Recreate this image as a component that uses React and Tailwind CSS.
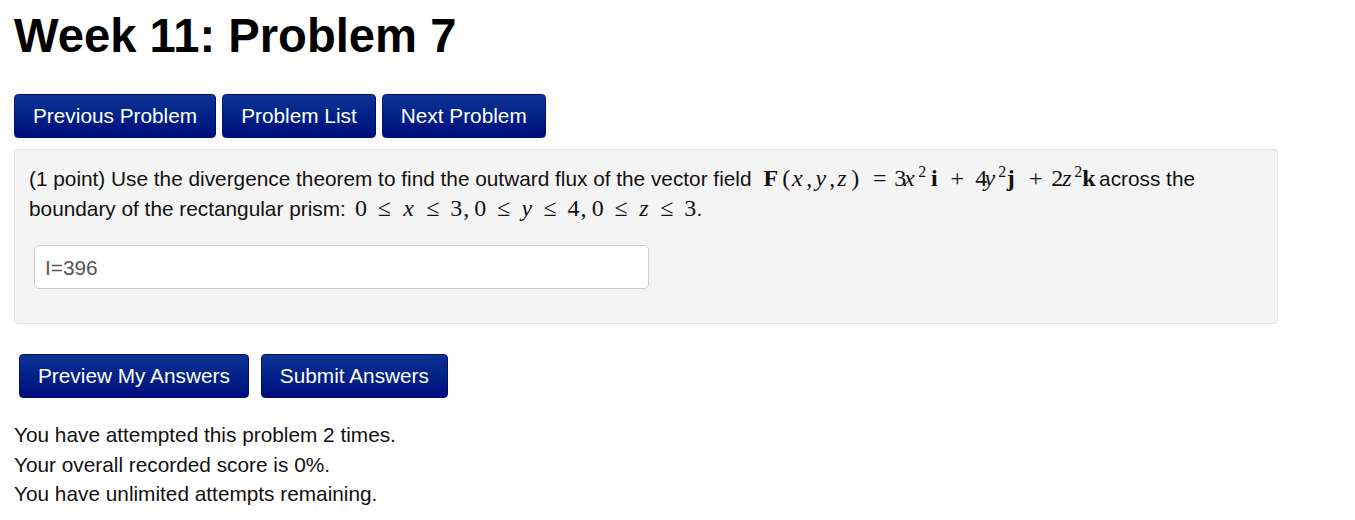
import React from "react";

const btn =
  "h-[44px] px-[18px] rounded-[4px] border border-[#00106a] bg-gradient-to-b from-[#0d3393] to-[#000b7d] text-white text-[20.8px] leading-none flex items-center";

const SUP = "text-[16px] relative top-[-9px]";

// [glyph, classes]
const line1 = [
  ["F", "w-[17px] ml-[5px] font-bold"],
  ["(", "w-[6px] ml-[3px]"],
  ["x", "w-[14px] ml-[2px] italic"],
  [",", "w-[3px] ml-[2px]"],
  ["y", "w-[13px] ml-[5px] italic"],
  [",", "w-[3px] ml-[2px]"],
  ["z", "w-[11px] ml-[4px] italic"],
  [")", "w-[6px] ml-[4px]"],
  ["=", "w-[15px] ml-[15px]"],
  ["3", "w-[8px] ml-[7px]"],
  ["x", "w-[16px] ml-[-1px] italic"],
  ["2", "w-[8px] ml-[1px] " + SUP],
  ["i", "w-[8px] ml-[4px] font-bold"],
  ["+", "w-[18px] ml-[10px]"],
  ["4", "w-[10px] ml-[9px]"],
  ["y", "w-[13px] ml-[-2px] italic"],
  ["2", "w-[7px] ml-[2px] " + SUP],
  ["j", "w-[9px] ml-[1px] font-bold"],
  ["+", "w-[19px] ml-[11px]"],
  ["2", "w-[10px] ml-[6px]"],
  ["z", "w-[13px] ml-[-1px] italic"],
  ["2", "w-[7px] ml-[1px] " + SUP],
  ["k", "w-[11px] ml-[1px] font-bold"],
];

const LE = "w-[19.8px] mx-[7.1px]";
const D = "w-[12.75px]";
const line2 = [
  ["0", D + " ml-[3px]"],
  ["≤", LE],
  ["x", "w-[14.6px] italic"],
  ["≤", LE],
  ["3", D],
  [",", "w-[7.1px] mr-[4.25px]"],
  ["0", D],
  ["≤", LE],
  ["y", "w-[12.5px] italic"],
  ["≤", LE],
  ["4", D],
  [",", "w-[7.1px] mr-[4.25px]"],
  ["0", D],
  ["≤", LE],
  ["z", "w-[11.9px] italic"],
  ["≤", LE],
  ["3", D],
];

function Math({ items }) {
  return (
    <span className="font-['Liberation_Serif',serif] text-[24px] leading-[20px] whitespace-nowrap">
      {items.map(([g, cls], i) => (
        <span key={i} className={"inline-block text-center " + cls}>
          {g}
        </span>
      ))}
    </span>
  );
}

export default function App() {
  return (
    <div className="w-[1355px] h-[520px] bg-white text-[#111] font-['Liberation_Sans',Arial,sans-serif] text-[20.8px] leading-[29.7px] overflow-hidden">
      <div className="pl-[14px] pt-[8px]">
        <h1 className="text-[47.2px] font-bold leading-[56px] text-black">Week 11: Problem 7</h1>
        <div className="flex gap-[6px] mt-[30px]">
          <button className={btn}>Previous Problem</button>
          <button className={btn}>Problem List</button>
          <button className={btn}>Next Problem</button>
        </div>
        <div className="mt-[11px] w-[1264px] h-[175px] bg-[#f4f4f4] border border-[#e3e3e3] rounded-[4px] pl-[14px] pr-[14px] pt-[14px]">
          <p>
            (1 point) Use the divergence theorem to find the outward flux of the vector field{" "}
            <Math items={line1} /> across the boundary of the rectangular prism:{" "}
            <Math items={line2} />.
          </p>
          <div className="mt-[22px] ml-[5px] w-[615px] h-[44px] bg-white border border-[#cccccc] rounded-[5px] flex items-center pl-[10px] text-[#555]">
            I=396
          </div>
        </div>
        <div className="flex gap-[12px] mt-[30px] ml-[5px]">
          <button className={btn}>Preview My Answers</button>
          <button className={btn}>Submit Answers</button>
        </div>
        <div className="mt-[22px]">
          <p>You have attempted this problem 2 times.</p>
          <p>Your overall recorded score is 0%.</p>
          <p>You have unlimited attempts remaining.</p>
        </div>
      </div>
    </div>
  );
}
